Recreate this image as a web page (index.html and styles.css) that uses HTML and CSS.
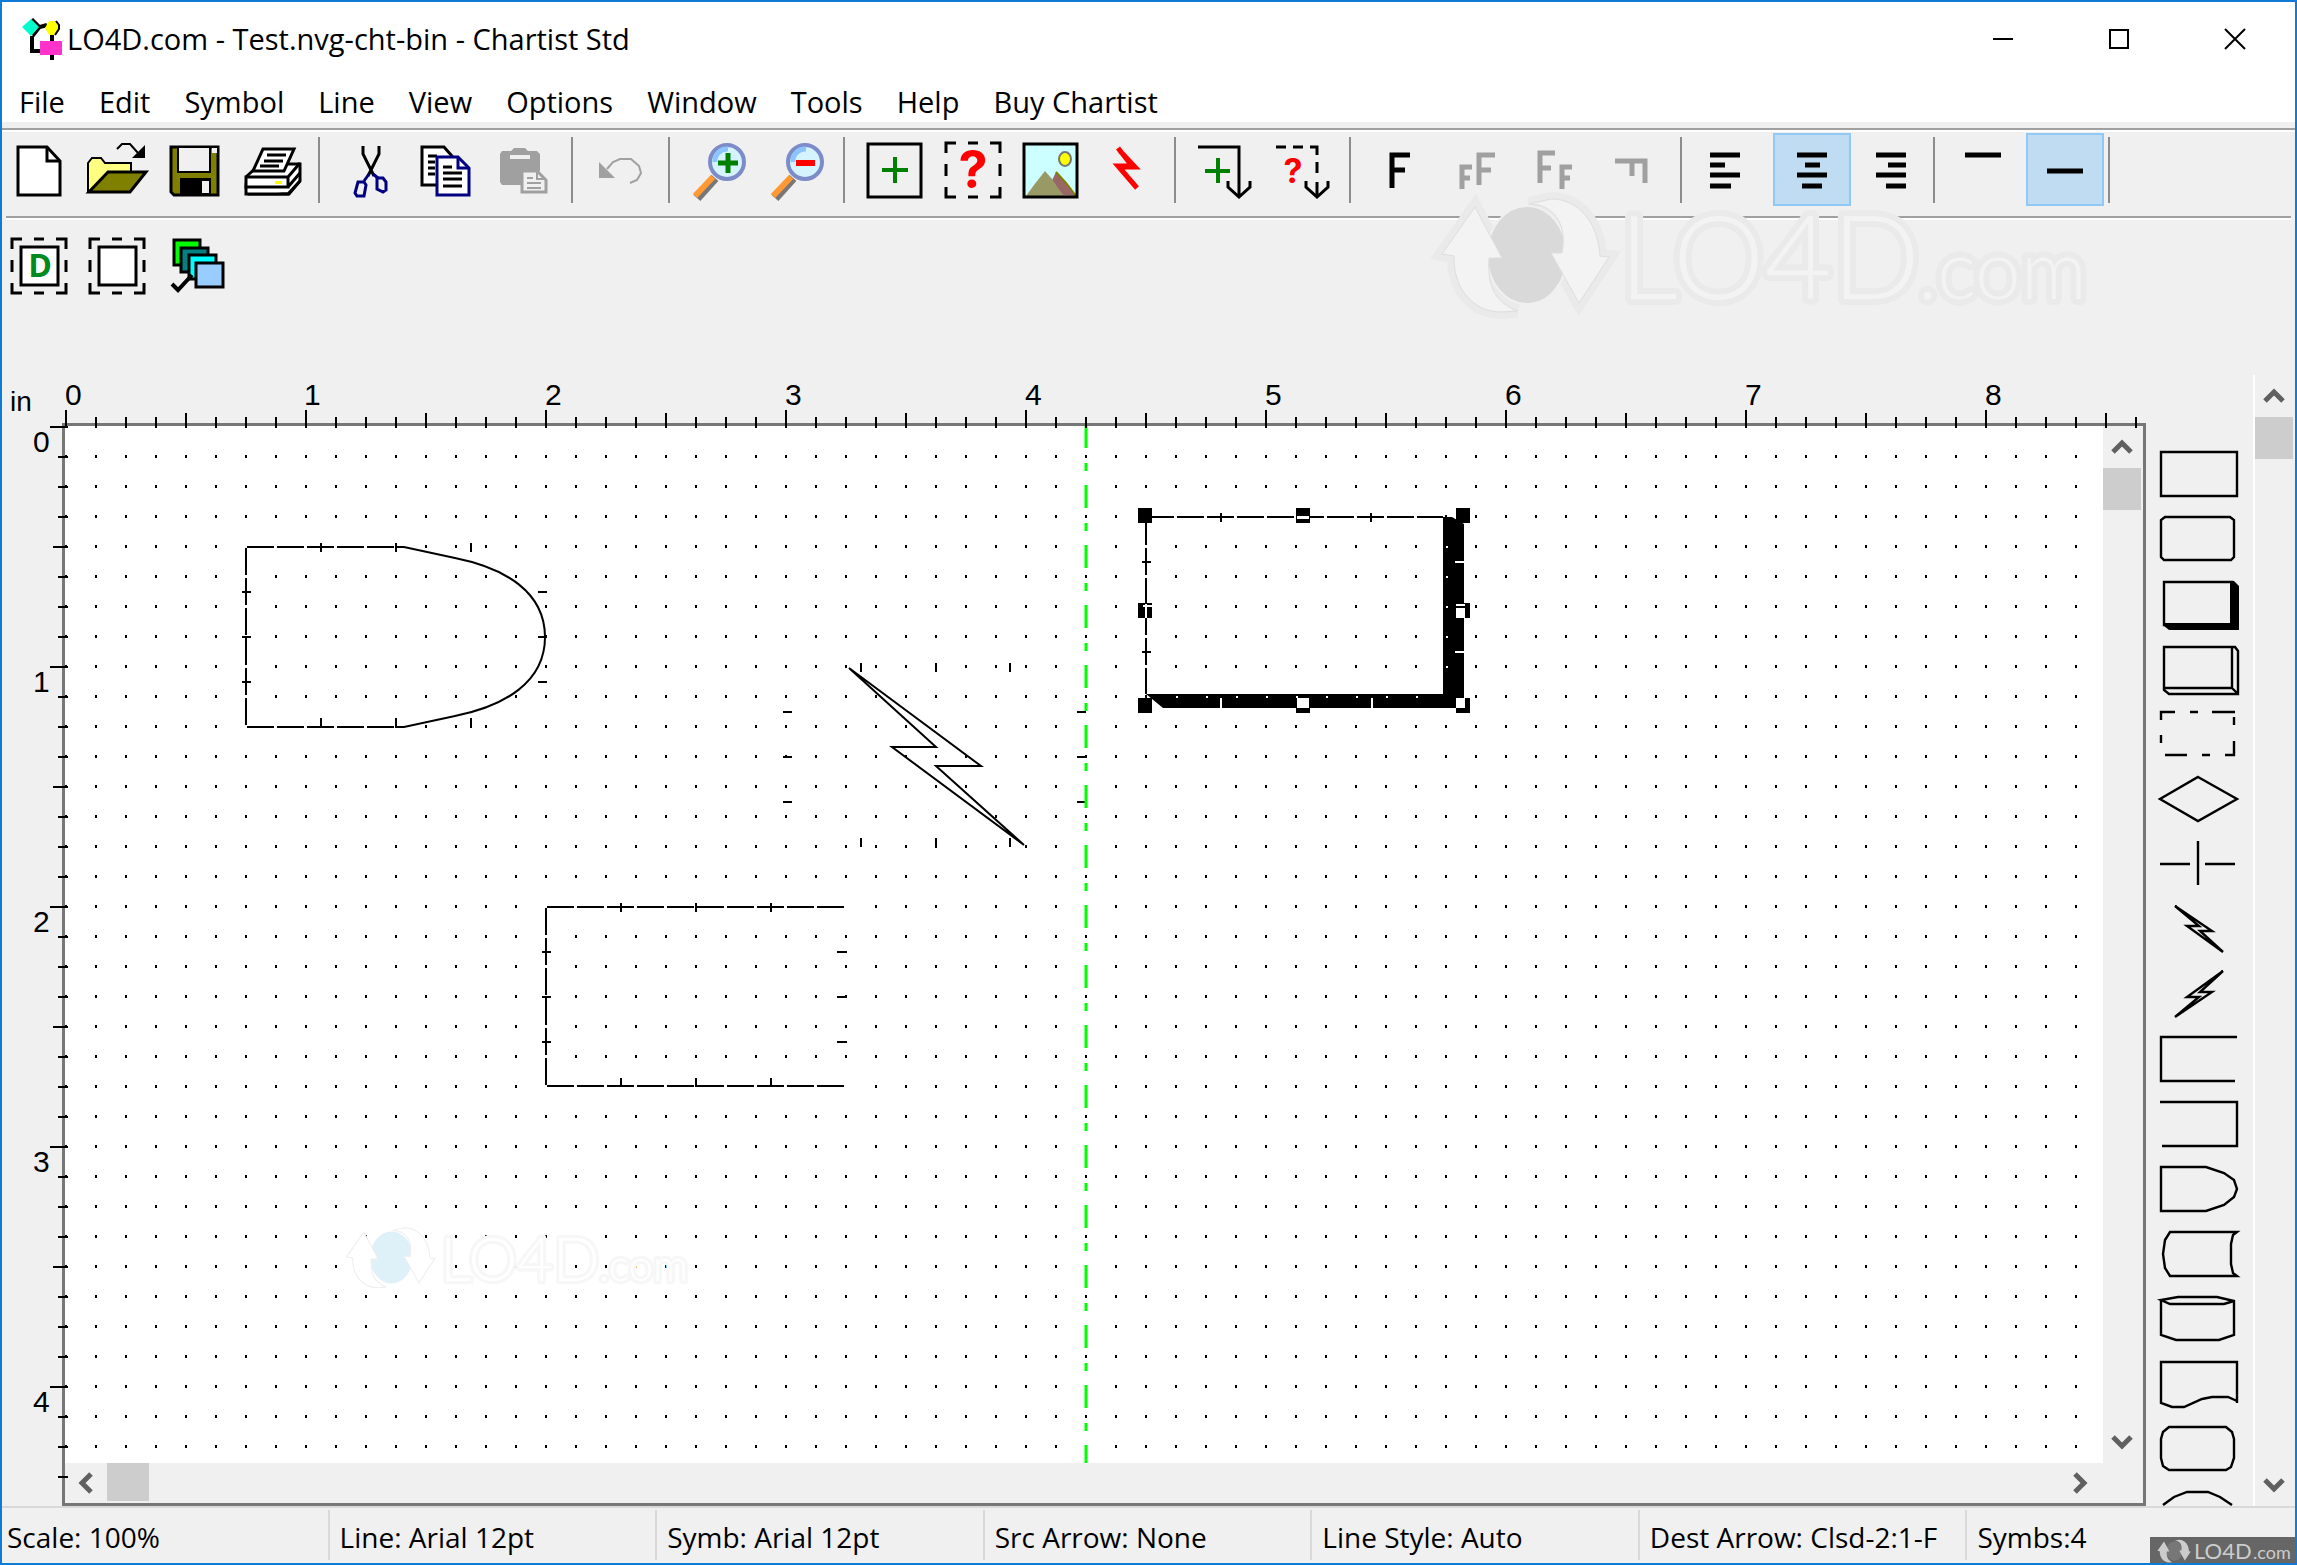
FILE: index.html
```html
<!DOCTYPE html>
<html lang="en">
<head>
<meta charset="utf-8">
<title>LO4D.com - Test.nvg-cht-bin - Chartist Std</title>
<link rel="stylesheet" href="styles.css">
</head>
<body>
<svg class="defs" aria-hidden="true">
  <defs>
    <symbol id="dashbox" viewBox="0 0 78 73">
      <path d="M10 20V10H20M32 10H42M54 10H64V20M64 31V43M64 54V64H54M42 64H32M20 64H10V54M10 43V31" fill="none" stroke="#000" stroke-width="3"/>
    </symbol>
    <g id="logo-arrows">
      <path d="M45 17L12 64L24 66C23 95 40 122 72 122L87 121C66 112 57 98 59 68L72 68Z"/>
      <path d="M149 113L179 67L170 66C168 34 150 9 121 9L99 14C122 14 138 32 132 63L121 63Z"/>
    </g>
    <g id="plus"><path d="M24 37H50M37 24V50" stroke="#008000" stroke-width="4"/></g>
    <path id="chev" d="M-9 5L0 -4L9 5" fill="none" stroke="#606060" stroke-width="5"/>
  </defs>
</svg>

<div class="window">
  <header class="titlebar">
    <svg class="app-icon" viewBox="0 0 42 42" aria-hidden="true">
      <path d="M10 18V33H20M18 9L25 7M30 14V24M30 36V42" fill="none" stroke="#000" stroke-width="4"/>
      <path d="M10 1L18 9L11 18" fill="none" stroke="#000" stroke-width="3"/>
      <path d="M9 1L17 9L9 18L0 9Z" fill="#00ffcc"/>
      <path d="M27 3H34L37 7V11L33 17H27L23 10Z" fill="#ff0"/><path d="M34 3L37 7V11L33 17" fill="none" stroke="#000" stroke-width="2"/>
      <path d="M18 23H40V37H18Z" fill="#ff33cc"/>
    </svg>
    <h1 class="title">LO4D.com - Test.nvg-cht-bin - Chartist Std</h1>
    <div class="win-buttons">
      <button type="button" aria-label="Minimize"><svg viewBox="0 0 20 20"><path d="M0 10H20"/></svg></button>
      <button type="button" aria-label="Maximize"><svg viewBox="0 0 20 20"><path d="M1 1H19V19H1Z"/></svg></button>
      <button type="button" aria-label="Close"><svg viewBox="0 0 20 20"><path d="M0 0L20 20M20 0L0 20"/></svg></button>
    </div>
  </header>

  <nav class="menu">
    <button type="button">File</button><button type="button">Edit</button><button type="button">Symbol</button><button type="button">Line</button><button type="button">View</button><button type="button">Options</button><button type="button">Window</button><button type="button">Tools</button><button type="button">Help</button><button type="button">Buy Chartist</button>
  </nav>

  <div class="toolbar main">
    <button type="button" aria-label="New"><svg viewBox="0 0 78 73"><path d="M16 14H45L58 28V62H16Z" fill="#fff" stroke="#000" stroke-width="3"/><path d="M45 14V28H58" fill="none" stroke="#000" stroke-width="3"/></svg></button>
    <button type="button" aria-label="Open"><svg viewBox="0 0 78 73"><path d="M8 58V30L12 25H21L25 30H51V40H28L10 58Z" fill="#ffff80" stroke="#000" stroke-width="2"/><path d="M28 39H66L50 59H9Z" fill="#808000" stroke="#000" stroke-width="3"/><path d="M37 16L42 11H50L58 20" fill="none" stroke="#000" stroke-width="2"/><path d="M65 12V25H52Z"/></svg></button>
    <button type="button" aria-label="Save"><svg viewBox="0 0 78 73"><path d="M13 14H60V62H16L13 59Z" fill="#808000" stroke="#000" stroke-width="3"/><path d="M20 14H52V39H20Z" fill="#f0f0f0" stroke="#000" stroke-width="2"/><path d="M54 15H59V20H54Z" fill="#f0f0f0"/><path d="M22 45H53V61H22Z"/><path d="M44 48H51V60H44Z" fill="#f0f0f0"/></svg></button>
    <button type="button" aria-label="Print"><svg viewBox="0 0 78 73"><g fill="#fff" stroke="#000" stroke-width="3"><path d="M11 43L24 31H64V48L53 61H13V54H10Z"/><path d="M27 16H58L48 38H17Z"/><path d="M31 22H50M28 28H47M24 33H43"/><path d="M10 44H52V54H10ZM52 44L64 30M52 54L64 40M52 61L64 48M10 54V61H53"/></g><path d="M39 48H46V51H39Z" fill="#ff0"/></svg></button>
    <span class="sep"></span>
    <button type="button" aria-label="Cut"><svg viewBox="0 0 78 73"><path d="M30 13V21L41 43M46 13V21L35 43" fill="none" stroke="#000" stroke-width="3"/><g fill="none" stroke="#000080" stroke-width="3"><path d="M36 41L31 48M40 41L45 45"/><path d="M25 49H31L33 52L31 63H24L22 60ZM44 45H50L53 49V57L50 59L44 56Z"/></g></svg></button>
    <button type="button" aria-label="Copy"><svg viewBox="0 0 78 73"><path d="M11 14H33L41 23V52H11Z" fill="#fff" stroke="#000" stroke-width="3"/><path d="M17 23H26M17 29H24M17 35H24M17 41H24" stroke="#000" stroke-width="3"/><path d="M26 24H47L58 35V62H26Z" fill="#fff" stroke="#000080" stroke-width="3"/><path d="M47 24V35H58" fill="none" stroke="#000080" stroke-width="3"/><path d="M32 34H41M32 40H51M32 46H51M32 53H51" stroke="#000" stroke-width="3"/></svg></button>
    <button type="button" aria-label="Paste" disabled><svg viewBox="0 0 78 73"><path d="M13 18H22L25 15H36L39 18H48L51 21V38H32V52H13L11 49V21Z" fill="#a0a0a0"/><path d="M21 22H41V26H21Z" fill="#f0f0f0"/><path d="M33 38H48L57 47V59H33Z" fill="#f0f0f0" stroke="#a0a0a0" stroke-width="3"/><path d="M38 45H44M38 50H52M38 55H52M48 38V46H57" fill="none" stroke="#a0a0a0" stroke-width="2"/></svg></button>
    <span class="sep"></span>
    <button type="button" aria-label="Undo" disabled><svg viewBox="0 0 78 73"><path d="M13 29V45H29Z" fill="#a0a0a0"/><path d="M21 36L27 29L34 26H45L53 33L55 40L51 47L44 50" fill="none" stroke="#a0a0a0" stroke-width="2"/></svg></button>
    <span class="sep"></span>
    <button type="button" aria-label="Zoom in"><svg viewBox="0 0 78 73"><path d="M32 45L14 65" stroke="#777" stroke-width="9"/><path d="M30 44L12 63" stroke="#ff9933" stroke-width="6"/><circle cx="44" cy="29" r="17" fill="#d5f2ff" stroke="#7d8cc8" stroke-width="4"/><path d="M32 29A12 12 0 0 1 45 16" fill="none" stroke="#8cc4ff" stroke-width="5"/><path d="M35 30H55M45 20V40" stroke="#008000" stroke-width="5"/></svg></button>
    <button type="button" aria-label="Zoom out"><svg viewBox="0 0 78 73"><path d="M32 45L14 65" stroke="#777" stroke-width="9"/><path d="M30 44L12 63" stroke="#ff9933" stroke-width="6"/><circle cx="44" cy="29" r="17" fill="#d5f2ff" stroke="#7d8cc8" stroke-width="4"/><path d="M32 29A12 12 0 0 1 45 16" fill="none" stroke="#8cc4ff" stroke-width="5"/><path d="M35 30H54" stroke="#f00" stroke-width="6"/></svg></button>
    <span class="sep"></span>
    <button type="button" aria-label="Add symbol"><svg viewBox="0 0 78 73"><path d="M10 11H63V64H10Z" fill="none" stroke="#000" stroke-width="3"/><use href="#plus"/></svg></button>
    <button type="button" aria-label="Symbol help"><svg viewBox="0 0 78 73"><use href="#dashbox"/><text class="q" x="37" y="55" font-size="52">?</text></svg></button>
    <button type="button" aria-label="Picture"><svg viewBox="0 0 78 73"><path d="M10 11H63V64H10Z" fill="#cff"/><path d="M34 62V56L42 39L52 50L62 63Z" fill="#966"/><path d="M12 63L20 52L31 38L38 46L44 55L50 63Z" fill="#996"/><path d="M42 39L52 50L62 63" fill="none" stroke="#808000" stroke-width="2"/><ellipse cx="51" cy="26" rx="6" ry="7" fill="#ff0" stroke="#777" stroke-width="2"/><path d="M10 11H63V64H10Z" fill="none" stroke="#000" stroke-width="3"/></svg></button>
    <button type="button" aria-label="Lightning"><svg viewBox="0 0 78 73"><path d="M26 15L40 33H26L45 55M28 18L43 34H30" fill="none" stroke="#f00" stroke-width="5"/></svg></button>
    <span class="sep"></span>
    <button type="button" aria-label="Add line"><svg viewBox="0 0 78 73"><path d="M9 14H50V63M39 48V54L50 64L61 54V48" fill="none" stroke="#000" stroke-width="3"/><path d="M16 38H41M29 25V50" stroke="#008000" stroke-width="4"/></svg></button>
    <button type="button" aria-label="Line help"><svg viewBox="0 0 78 73"><path d="M9 14H19M26 14H36M43 14H50V22M50 29V40M50 49V63M39 48V54L50 64L61 54V48" fill="none" stroke="#000" stroke-width="3"/><text class="q" x="26" y="50" font-size="34">?</text></svg></button>
    <span class="sep"></span>
    <button type="button" aria-label="Font"><svg viewBox="0 0 78 73"><path d="M28 55V22H46M28 37H41" fill="none" stroke="#000" stroke-width="5"/></svg></button>
    <button type="button" aria-label="Larger font" disabled><svg viewBox="0 0 78 73"><path d="M20 56V34H30M20 45H28M37 52V22H53M37 37H49" fill="none" stroke="#a0a0a0" stroke-width="5"/></svg></button>
    <button type="button" aria-label="Smaller font" disabled><svg viewBox="0 0 78 73"><path d="M20 50V20H35M20 35H31M42 56V34H52M42 45H50" fill="none" stroke="#a0a0a0" stroke-width="5"/></svg></button>
    <button type="button" aria-label="Rotate text" disabled><svg viewBox="0 0 78 73"><path d="M17 28H47V50M34 28V43" fill="none" stroke="#a0a0a0" stroke-width="5"/></svg></button>
    <span class="sep"></span>
    <button type="button" aria-label="Align left"><svg viewBox="0 0 78 73"><path d="M15 22H45M15 32H30M15 42H45M15 53H36" stroke="#000" stroke-width="5"/></svg></button>
    <button type="button" class="on" aria-label="Align center"><svg viewBox="0 0 78 73"><path d="M24 22H54M32 32H47M24 42H54M29 53H49" stroke="#000" stroke-width="5"/></svg></button>
    <button type="button" aria-label="Align right"><svg viewBox="0 0 78 73"><path d="M25 22H55M37 32H55M25 42H55M35 53H55" stroke="#000" stroke-width="5"/></svg></button>
    <span class="sep"></span>
    <button type="button" aria-label="Align top"><svg viewBox="0 0 78 73"><path d="M17 22H53" stroke="#000" stroke-width="5"/></svg></button>
    <button type="button" class="on" aria-label="Align middle"><svg viewBox="0 0 78 73"><path d="M21 38H57" stroke="#000" stroke-width="5"/></svg></button>
    <span class="sep"></span>
  </div>
  <div class="toolbar second">
    <button type="button" aria-label="Default symbol"><svg viewBox="0 0 78 73"><use href="#dashbox"/><path d="M19 18H56V56H19Z" fill="#fff" stroke="#000" stroke-width="3"/><text class="d" x="38" y="48">D</text></svg></button>
    <button type="button" aria-label="Blank symbol"><svg viewBox="0 0 78 73"><use href="#dashbox"/><path d="M19 18H56V56H19Z" fill="#fff" stroke="#000" stroke-width="3"/></svg></button>
    <button type="button" aria-label="Layers"><svg viewBox="0 0 78 73"><g stroke="#000" stroke-width="3"><path d="M16 11H42V36H16Z" fill="#0f0"/><path d="M23 19H50V43H23Z" fill="#008080"/><path d="M31 26H58V50H31Z" fill="#0ff"/><path d="M38 34H65V58H38Z" fill="#9cf"/></g><path d="M14 55L20 61L34 46" fill="none" stroke="#000" stroke-width="4"/></svg></button>
  </div>

  <main class="workspace">
    <div class="unit">in</div>
    <svg class="ruler-top" aria-label="Horizontal ruler">
      <defs>
        <pattern id="t1" width="30" height="53" patternUnits="userSpaceOnUse"><path d="M3 42H5V53H3Z"/></pattern>
        <pattern id="t2" width="120" height="53" patternUnits="userSpaceOnUse"><path d="M3 38H5V53H3Z"/></pattern>
        <pattern id="t3" width="240" height="53" patternUnits="userSpaceOnUse"><path d="M3 35H5V53H3Z"/></pattern>
      </defs>
      <rect width="100%" height="53" fill="url(#t1)"/><rect width="100%" height="53" fill="url(#t2)"/><rect width="100%" height="53" fill="url(#t3)"/>
      <text x="3" y="30">0</text><text x="242" y="30">1</text><text x="483" y="30">2</text><text x="723" y="30">3</text><text x="963" y="30">4</text><text x="1203" y="30">5</text><text x="1443" y="30">6</text><text x="1683" y="30">7</text><text x="1923" y="30">8</text>
    </svg>
    <svg class="ruler-left" aria-label="Vertical ruler">
      <defs>
        <pattern id="v1" width="66" height="30" patternUnits="userSpaceOnUse"><path d="M56 3H66V5H56Z"/></pattern>
        <pattern id="v2" width="66" height="120" patternUnits="userSpaceOnUse"><path d="M51 3H66V5H51Z"/></pattern>
        <pattern id="v3" width="66" height="240" patternUnits="userSpaceOnUse"><path d="M48 3H66V5H48Z"/></pattern>
      </defs>
      <rect width="66" height="100%" fill="url(#v1)"/><rect width="66" height="100%" fill="url(#v2)"/><rect width="66" height="100%" fill="url(#v3)"/>
      <text x="31" y="29">0</text><text x="31" y="269">1</text><text x="31" y="509">2</text><text x="31" y="749">3</text><text x="31" y="989">4</text>
    </svg>

    <section class="frame">
      <svg class="canvas" aria-label="Drawing">
        <defs><pattern id="dots" x="17" y="16" width="30" height="30" patternUnits="userSpaceOnUse"><path d="M13 13H15V16H13Z"/></pattern></defs>
        <rect width="100%" height="100%" fill="#fff"/>
        <rect width="100%" height="100%" fill="url(#dots)"/>
        <g transform="translate(-65 -426)" fill="none" stroke="#000" stroke-width="2">
          <path d="M397 547H246V727H397M847 907H546V1086H847M1443 517H1146V694" stroke="#fff" stroke-width="5"/>
          <path d="M247 547H397M247 727H397M547 907H845M547 1086H847M1147 517H1443" stroke-dasharray="27 3"/>
          <path d="M246 548V727M546 908V1086M1146 518V694" stroke-dasharray="27 3"/>
          <path d="M396 547H404L455 558C505 568 545 592 545 637C545 682 505 706 455 716L404 727H396"/>
          <path d="M321 543V552M396 543V552M471 543V552M321 718V728M396 718V728M471 718V728M242 592H251M242 637H251M242 682H251M538 592H547M538 637H547M538 682H547"/>
          <path d="M621 903V912M696 903V912M771 903V912M621 1078V1087M696 1078V1087M771 1078V1087M542 952H551M542 997H551M542 1042H551M837 952H847M837 997H847M837 1042H847"/>
          <path d="M849 668L981 766H936L1024 845L892 747H936Z"/>
          <path d="M861 663V672M936 663V672M1010 663V672M861 838V847M936 838V847M1010 838V847M783 712H792M783 757H792M783 802H792M1077 712H1086M1077 757H1086M1077 802H1086"/>
          <path d="M1086 425V1463" stroke="#0f0" stroke-width="3" stroke-dasharray="23 15 8 14"/>
          <g stroke="none" fill="#000">
            <path d="M1443 517H1452L1464 524V708H1163L1146 694H1443Z"/>
            <path d="M1138 508H1152V523H1138ZM1296 508H1310V523H1296ZM1456 508H1470V523H1456ZM1138 603H1152V618H1138ZM1456 603H1470V618H1456ZM1138 698H1152V713H1138ZM1296 698H1310V713H1296ZM1456 698H1470V713H1456Z"/>
            <path d="M1297 698H1309V708H1297ZM1456 698H1465V708H1456ZM1456 608H1465V618H1456ZM1456 604H1465V606H1456ZM1297 516H1309V519H1297ZM1220 698H1222V708H1220ZM1371 698H1373V708H1371ZM1455 561H1465V563H1455ZM1455 651H1465V653H1455ZM1145 604H1147V618H1145ZM1143 605H1152V607H1143Z" fill="#fff"/>
            <path d="M1446 546H1448V548H1446ZM1446 576H1448V578H1446ZM1446 606H1448V608H1446ZM1446 636H1448V638H1446ZM1446 666H1448V668H1446Z" fill="#fff"/>
          </g>
          <path d="M1176 697H1440" stroke="#fff" stroke-dasharray="2 28"/>
          <path d="M1221 513V522M1371 513V522M1142 562H1151M1142 652H1151"/>
        </g>
        <g class="wm-canvas" transform="translate(275 797) scale(.53)">
          <ellipse cx="97" cy="65" rx="40" ry="49" fill="#def0f8"/>
          <use href="#logo-arrows" fill="#fff" stroke="#eee" stroke-width="2"/>
          <text class="wm-big" x="189" y="109">LO4D</text><text class="wm-com" x="488" y="109">.com</text>
        </g>
      </svg>
      <div class="scroll-v">
        <button type="button" aria-label="Scroll up"><svg viewBox="-18 -20 36 40"><use href="#chev"/></svg></button>
        <div class="thumb"></div>
        <button type="button" class="end" aria-label="Scroll down"><svg viewBox="-18 -20 36 40"><use href="#chev" transform="rotate(180)"/></svg></button>
      </div>
      <div class="scroll-h">
        <button type="button" aria-label="Scroll left"><svg viewBox="-18 -20 36 40"><use href="#chev" transform="rotate(-90)"/></svg></button>
        <div class="thumb"></div>
        <button type="button" class="end" aria-label="Scroll right"><svg viewBox="-18 -20 36 40"><use href="#chev" transform="rotate(90)"/></svg></button>
      </div>
    </section>

    <aside class="palette">
      <button type="button" aria-label="Rectangle"><svg viewBox="0 0 107 65"><path d="M15 10H91V54H15Z"/></svg></button>
      <button type="button" aria-label="Rounded rectangle"><svg viewBox="0 0 107 65"><path d="M19 10H84L88 13V50L85 53H18L15 50V13Z"/></svg></button>
      <button type="button" aria-label="Shadow rectangle"><svg viewBox="0 0 107 65"><path d="M18 10H86V53H18Z"/><path d="M84 9H88L93 14V58H23L18 54V51H84Z" fill="#000" stroke="none"/></svg></button>
      <button type="button" aria-label="3D rectangle"><svg viewBox="0 0 107 65"><path d="M18 10H86V51H18ZM86 10H89L92 14V57H23L18 53V51M86 51L92 57"/></svg></button>
      <button type="button" aria-label="Dashed rectangle"><svg viewBox="0 0 107 65"><path d="M15 18V10H29M44 10H52M66 10H89M88 15V23M88 39V53H79M64 53H56M41 53H19M15 41V33"/></svg></button>
      <button type="button" aria-label="Diamond"><svg viewBox="0 0 107 65"><path d="M52 10L91 32L52 54L14 32Z"/></svg></button>
      <button type="button" aria-label="Cross"><svg viewBox="0 0 107 65"><path d="M52 9V53M14 32H44M59 32H89"/></svg></button>
      <button type="button" aria-label="Lightning down"><svg viewBox="0 0 107 65"><path d="M29 9L66 34H54L77 55L41 29H53Z"/></svg></button>
      <button type="button" aria-label="Lightning up"><svg viewBox="0 0 107 65"><path d="M29 55L66 30H54L77 9L41 35H53Z"/></svg></button>
      <button type="button" aria-label="Open right"><svg viewBox="0 0 107 65"><path d="M91 10H15V54H89"/></svg></button>
      <button type="button" aria-label="Open left"><svg viewBox="0 0 107 65"><path d="M14 10H91V54H16"/></svg></button>
      <button type="button" aria-label="Delay"><svg viewBox="0 0 107 65"><path d="M15 10H60L78 16L88 23L91 32L88 40L78 48L60 54H15Z"/></svg></button>
      <button type="button" aria-label="Stored data"><svg viewBox="0 0 107 65"><path d="M91 10H24L19 18L17 32L19 46L24 54H91L87 51L85 42V22L87 13Z"/></svg></button>
      <button type="button" aria-label="Cylinder"><svg viewBox="0 0 107 65"><path d="M15 12V48L30 53H73L88 48V14L71 10H32L15 13L24 17H78L88 14"/></svg></button>
      <button type="button" aria-label="Document"><svg viewBox="0 0 107 65"><path d="M91 51V10H15V51L26 55H38L56 47L66 45H82L91 49"/></svg></button>
      <button type="button" aria-label="Terminator"><svg viewBox="0 0 107 65"><path d="M23 10H80L86 15L88 22V41L85 50L80 53H23L17 49L15 41V22L17 15Z"/></svg></button>
      <button type="button" aria-label="Ellipse"><svg viewBox="0 0 107 65"><path d="M17 23L28 15L41 10H62L74 15L86 23"/></svg></button>
    </aside>

    <div class="scroll-v outer">
      <button type="button" aria-label="Palette up"><svg viewBox="-18 -20 36 40"><use href="#chev"/></svg></button>
      <div class="thumb"></div>
      <button type="button" class="end" aria-label="Palette down"><svg viewBox="-18 -20 36 40"><use href="#chev" transform="rotate(180)"/></svg></button>
    </div>
  </main>

  <footer class="status">
    <span>Scale: 100%</span><span>Line: Arial 12pt</span><span>Symb: Arial 12pt</span><span>Src Arrow: None</span><span>Line Style: Auto</span><span>Dest Arrow: Clsd-2:1-F</span><span>Symbs:4</span>
  </footer>

  <svg class="wm-top" viewBox="0 0 680 145" aria-hidden="true">
    <use href="#logo-arrows" fill="#eaeaea" stroke="#eaeaea" stroke-width="14"/>
    <ellipse cx="97" cy="65" rx="40" ry="49" fill="#d9d9d9" stroke="#f0f0f0" stroke-width="2"/>
    <use href="#logo-arrows" fill="#f3f3f3" stroke="#dedede"/>
    <text class="wm-big" x="189" y="109">LO4D</text><text class="wm-com" x="488" y="109">.com</text>
  </svg>
  <svg class="wm-badge" viewBox="0 0 145 28" aria-hidden="true">
    <rect width="145" height="28" fill="#666"/>
    <g transform="translate(5 1) scale(.2)"><ellipse cx="97" cy="65" rx="40" ry="49" fill="#777"/><use href="#logo-arrows" fill="#ccc"/></g>
    <text x="44" y="22" font-size="22">LO4D</text><text x="103" y="22" font-size="18">.com</text>
  </svg>
</div>
</body>
</html>
```
FILE: styles.css
```css
* { box-sizing: border-box; }
body { margin: 0; background: #f0f0f0; font-family: "Open Sans", "Noto Sans", sans-serif; font-size: 28px; color: #000; }
button { margin: 0; padding: 0; border: 0; background: none; font: inherit; color: inherit; }
svg { display: block; }
.defs { position: absolute; width: 0; height: 0; }

.window { position: relative; display: flex; flex-direction: column; height: 100vh; border: 2px solid #0f7bd7; overflow: hidden; }

.titlebar { display: flex; align-items: center; height: 74px; padding: 0 2px 0 20px; background: #fff; flex: none; }
.app-icon { width: 42px; height: 42px; }
.title { flex: 1; margin: 0; padding-left: 3px; font-size: 29px; font-weight: 400; line-height: 40px; white-space: nowrap; }
.win-buttons { display: flex; align-self: stretch; }
.win-buttons button { display: flex; justify-content: center; align-items: center; width: 116px; }
.win-buttons svg { width: 20px; height: 20px; fill: none; stroke: #000; stroke-width: 2; overflow: visible; }

.menu { display: flex; gap: 34px; height: 46px; padding-left: 17px; background: #fff; flex: none; font-size: 29px; line-height: 52px; }
.menu button { height: 46px; white-space: nowrap; }

.toolbar { display: flex; flex: none; }
.toolbar.main { height: 94px; padding-top: 11px; background: linear-gradient(#f0f0f0 6px, #a0a0a0 6px, #a0a0a0 8px, #fff 8px, #fff 10px, #f0f0f0 10px); }
.toolbar.second { height: 159px; margin: 0 4px; padding-top: 11px; border-top: 2px solid #a0a0a0; background: linear-gradient(#fff 2px, #f0f0f0 2px); }
.toolbar.second button:first-child { margin-left: -4px; }
.toolbar button, .toolbar svg { flex: none; width: 78px; height: 73px; }
.toolbar .on { background: #c0dcf3; box-shadow: inset 0 0 0 2px #90c8f6; }
.sep { flex: none; width: 2px; height: 66px; margin: 4px 13px 0 4px; background: #8c8c8c; }
.q { font-family: Inter, sans-serif; font-weight: 700; fill: #f00; text-anchor: middle; }
.d { font-weight: 700; font-size: 32px; fill: #008a20; text-anchor: middle; }

.workspace { flex: 1; min-height: 0; display: grid; grid-template-columns: 60px minmax(0, 1fr) 107px 42px; grid-template-rows: 48px minmax(0, 1fr); }
.unit { padding-left: 8px; font: 28px/54px "Liberation Sans", sans-serif; }
.ruler-top, .ruler-left { font: 30px "Liberation Sans", sans-serif; z-index: 1; }
.ruler-top { width: 100%; height: 53px; }
.ruler-left { grid-row: 2; width: 66px; height: 100%; }
.frame { grid-row: 2; grid-column: 2; display: grid; grid-template-columns: minmax(0, 1fr) 40px; grid-template-rows: minmax(0, 1fr) 40px; border: 3px solid #777; }
.canvas { width: 100%; height: 100%; }
.scroll-v, .scroll-h { display: flex; background: #f0f0f0; }
.scroll-v { flex-direction: column; width: 38px; }
.scroll-v button { width: 38px; height: 42px; flex: none; }
.scroll-v svg, .scroll-h svg { width: 36px; height: 40px; margin: 0 auto; }
.thumb { background: #cdcdcd; width: 38px; height: 42px; }
.scroll-h { grid-column: 1 / 3; height: 38px; padding-right: 42px; }
.scroll-h button { width: 42px; height: 38px; flex: none; }
.scroll-h .thumb { height: 38px; width: 42px; }
.scroll-v .end { margin-top: auto; }
.scroll-h .end { margin-left: auto; }
.palette { grid-column: 3; grid-row: 1 / 3; padding-top: 67px; overflow: hidden; }
.palette button { display: block; width: 107px; height: 65px; }
.palette svg { width: 107px; height: 65px; fill: none; stroke: #000; stroke-width: 2.4px; }
.outer { grid-column: 4; grid-row: 1 / 3; width: 42px; padding-right: 2px; border-left: 2px solid #fff; }

.status { flex: none; display: grid; grid-template-columns: repeat(7, minmax(0, 1fr)); height: 57px; padding-top: 2px; border-top: 2px solid #d9d9d9; }
.status span { padding-left: 10px; height: 50px; border-right: 2px solid #d9d9d9; line-height: 54px; white-space: nowrap; }
.status span:first-child { padding-left: 5px; }
.status span:last-child { border-right: 0; }

.wm-top { position: absolute; top: 188px; right: 185px; width: 680px; height: 145px; pointer-events: none; }
.wm-big, .wm-com { font-family: Lato, sans-serif; font-weight: 300; fill: #f3f3f3; stroke: #eaeaea; stroke-width: 12px; paint-order: stroke; stroke-linejoin: round; }
.wm-big { font-size: 116px; }
.wm-com { font-size: 82px; }
.wm-canvas text { fill: #fff; stroke: #f7f7f7; }
.wm-badge { position: absolute; right: 0; bottom: -2px; width: 145px; height: 28px; font-family: Lato, sans-serif; fill: #ccc; }
```
